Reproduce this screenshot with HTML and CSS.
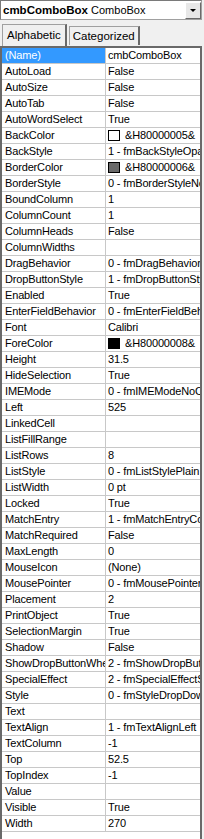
FILE: index.html
```html
<!DOCTYPE html>
<html>
<head>
<meta charset="utf-8">
<link rel="stylesheet" href="styles.css">
</head>
<body>
<div class="combo">
  <div class="combo-text"><b>cmbComboBox</b> ComboBox</div>
  <div class="combo-btn"><span class="arrow"></span></div>
</div>
<div class="tabs">
  <div class="tab sel">Alphabetic</div>
  <div class="tab">Categorized</div>
</div>
<div class="grid">
  <div class="row selrow"><div class="n">(Name)</div><div class="v">cmbComboBox</div></div>
  <div class="row"><div class="n">AutoLoad</div><div class="v">False</div></div>
  <div class="row"><div class="n">AutoSize</div><div class="v">False</div></div>
  <div class="row"><div class="n">AutoTab</div><div class="v">False</div></div>
  <div class="row"><div class="n">AutoWordSelect</div><div class="v">True</div></div>
  <div class="row"><div class="n">BackColor</div><div class="v"><span class="sw sw-white"></span>&amp;H80000005&amp;</div></div>
  <div class="row"><div class="n">BackStyle</div><div class="v">1 - fmBackStyleOpaque</div></div>
  <div class="row"><div class="n">BorderColor</div><div class="v"><span class="sw sw-gray"></span>&amp;H80000006&amp;</div></div>
  <div class="row"><div class="n">BorderStyle</div><div class="v">0 - fmBorderStyleNone</div></div>
  <div class="row"><div class="n">BoundColumn</div><div class="v">1</div></div>
  <div class="row"><div class="n">ColumnCount</div><div class="v">1</div></div>
  <div class="row"><div class="n">ColumnHeads</div><div class="v">False</div></div>
  <div class="row"><div class="n">ColumnWidths</div><div class="v"></div></div>
  <div class="row"><div class="n">DragBehavior</div><div class="v">0 - fmDragBehaviorDisabled</div></div>
  <div class="row"><div class="n">DropButtonStyle</div><div class="v">1 - fmDropButtonStyleArrow</div></div>
  <div class="row"><div class="n">Enabled</div><div class="v">True</div></div>
  <div class="row"><div class="n">EnterFieldBehavior</div><div class="v">0 - fmEnterFieldBehaviorSelectAll</div></div>
  <div class="row"><div class="n">Font</div><div class="v">Calibri</div></div>
  <div class="row"><div class="n">ForeColor</div><div class="v"><span class="sw sw-black"></span>&amp;H80000008&amp;</div></div>
  <div class="row"><div class="n">Height</div><div class="v">31.5</div></div>
  <div class="row"><div class="n">HideSelection</div><div class="v">True</div></div>
  <div class="row"><div class="n">IMEMode</div><div class="v">0 - fmIMEModeNoControl</div></div>
  <div class="row"><div class="n">Left</div><div class="v">525</div></div>
  <div class="row"><div class="n">LinkedCell</div><div class="v"></div></div>
  <div class="row"><div class="n">ListFillRange</div><div class="v"></div></div>
  <div class="row"><div class="n">ListRows</div><div class="v">8</div></div>
  <div class="row"><div class="n">ListStyle</div><div class="v">0 - fmListStylePlain</div></div>
  <div class="row"><div class="n">ListWidth</div><div class="v">0 pt</div></div>
  <div class="row"><div class="n">Locked</div><div class="v">True</div></div>
  <div class="row"><div class="n">MatchEntry</div><div class="v">1 - fmMatchEntryComplete</div></div>
  <div class="row"><div class="n">MatchRequired</div><div class="v">False</div></div>
  <div class="row"><div class="n">MaxLength</div><div class="v">0</div></div>
  <div class="row"><div class="n">MouseIcon</div><div class="v">(None)</div></div>
  <div class="row"><div class="n">MousePointer</div><div class="v">0 - fmMousePointerDefault</div></div>
  <div class="row"><div class="n">Placement</div><div class="v">2</div></div>
  <div class="row"><div class="n">PrintObject</div><div class="v">True</div></div>
  <div class="row"><div class="n">SelectionMargin</div><div class="v">True</div></div>
  <div class="row"><div class="n">Shadow</div><div class="v">False</div></div>
  <div class="row"><div class="n">ShowDropButtonWhen</div><div class="v">2 - fmShowDropButtonWhenAlways</div></div>
  <div class="row"><div class="n">SpecialEffect</div><div class="v">2 - fmSpecialEffectSunken</div></div>
  <div class="row"><div class="n">Style</div><div class="v">0 - fmStyleDropDownCombo</div></div>
  <div class="row"><div class="n">Text</div><div class="v"></div></div>
  <div class="row"><div class="n">TextAlign</div><div class="v">1 - fmTextAlignLeft</div></div>
  <div class="row"><div class="n">TextColumn</div><div class="v">-1</div></div>
  <div class="row"><div class="n">Top</div><div class="v">52.5</div></div>
  <div class="row"><div class="n">TopIndex</div><div class="v">-1</div></div>
  <div class="row"><div class="n">Value</div><div class="v"></div></div>
  <div class="row"><div class="n">Visible</div><div class="v">True</div></div>
  <div class="row"><div class="n">Width</div><div class="v">270</div></div>
</div>
</body>
</html>
```
FILE: styles.css
```css
html, body {
  margin: 0;
  padding: 0;
}
body {
  width: 204px;
  height: 839px;
  overflow: hidden;
  background: #f0f0f0;
  font-family: "Liberation Sans", Arial, sans-serif;
  font-size: 11px;
  color: #000;
}
.combo {
  box-sizing: border-box;
  width: 202px;
  height: 20px;
  border: 1px solid #7a7a7a;
  border-right-color: #a0a0a0;
  border-bottom-color: #a0a0a0;
  background: #fff;
  display: flex;
  align-items: center;
}
.combo-text {
  flex: 1;
  padding-left: 2px;
  white-space: nowrap;
  overflow: hidden;
  font-size: 11px;
}
.combo-text b {
  font-size: 11.5px;
}
.combo-btn {
  box-sizing: border-box;
  width: 16px;
  height: 17px;
  background: #e8e8e8;
  border: 1px solid #fff;
  border-right-color: #6a6a6a;
  border-bottom-color: #6a6a6a;
  display: flex;
  align-items: center;
  justify-content: center;
}
.arrow {
  width: 0;
  height: 0;
  border-left: 3px solid transparent;
  border-right: 3px solid transparent;
  border-top: 3px solid #000;
}
.tabs {
  height: 26px;
  display: flex;
  align-items: flex-end;
  padding-left: 2px;
  box-sizing: border-box;
}
.tab {
  box-sizing: border-box;
  height: 19px;
  margin-bottom: 1px;
  padding: 0 3px;
  border: 1px solid #a0a0a0;
  border-bottom: none;
  border-right: 2px solid #696969;
  display: flex;
  align-items: center;
  font-size: 11.5px;
  margin-left: 2px;
}
.tab.sel {
  height: 22px;
  margin-bottom: 0;
  margin-left: 0;
  padding: 0 4px 2px;
  background: #f0f0f0;
}
.grid {
  box-sizing: border-box;
  width: 202px;
  height: 793px;
  background: #fff;
  border-top: 2px solid #696969;
  border-left: 2px solid #696969;
  border-right: 2px solid #696969;
  box-shadow: -1px 0 0 #a0a0a0;
}
.row {
  display: flex;
  height: 16px;
  box-sizing: border-box;
  border-bottom: 1px solid #c8c8c8;
  letter-spacing: -0.15px;
}
.n {
  box-sizing: border-box;
  width: 104px;
  padding-left: 3px;
  border-right: 1px solid #c8c8c8;
  white-space: nowrap;
  overflow: hidden;
  line-height: 15px;
}
.v {
  flex: 1;
  padding-left: 2px;
  white-space: nowrap;
  overflow: hidden;
  line-height: 15px;
  display: flex;
  align-items: center;
}
.selrow .n {
  background: #3399ff;
  color: #fff;
}
.sw {
  box-sizing: border-box;
  width: 12px;
  height: 11px;
  border: 1px solid #000;
  margin-right: 5px;
  flex: none;
}
.sw-white { background: #fff; }
.sw-gray { background: #696969; }
.sw-black { background: #000; }
```
